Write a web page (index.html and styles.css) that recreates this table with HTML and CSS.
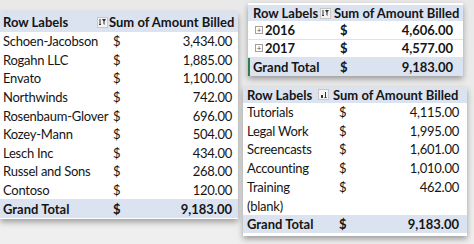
FILE: index.html
```html
<!DOCTYPE html>
<html>
<head>
<meta charset="utf-8">
<link rel="stylesheet" href="styles.css">
</head>
<body>
<div class="canvas">
  <div class="pivot left">
    <div class="row head">
      <span class="lbl">Row Labels<span class="fbtn"><svg width="9" height="8" viewBox="0 0 9 8"><path d="M2 1v6M1 6l1 1 1-1" stroke="#333" stroke-width="1" fill="none"/><path d="M4 1h4L6.5 3.5V7L5.5 6V3.5z" fill="#333"/></svg></span></span>
      <span class="sum">Sum of Amount Billed</span>
    </div>
    <div class="row"><span class="lbl">Schoen-Jacobson</span><span class="cur">$</span><span class="val">3,434.00</span></div>
    <div class="row"><span class="lbl">Rogahn LLC</span><span class="cur">$</span><span class="val">1,885.00</span></div>
    <div class="row"><span class="lbl">Envato</span><span class="cur">$</span><span class="val">1,100.00</span></div>
    <div class="row"><span class="lbl">Northwinds</span><span class="cur">$</span><span class="val">742.00</span></div>
    <div class="row"><span class="lbl">Rosenbaum-Glover</span><span class="cur">$</span><span class="val">696.00</span></div>
    <div class="row"><span class="lbl">Kozey-Mann</span><span class="cur">$</span><span class="val">504.00</span></div>
    <div class="row"><span class="lbl">Lesch Inc</span><span class="cur">$</span><span class="val">434.00</span></div>
    <div class="row"><span class="lbl">Russel and Sons</span><span class="cur">$</span><span class="val">268.00</span></div>
    <div class="row"><span class="lbl">Contoso</span><span class="cur">$</span><span class="val">120.00</span></div>
    <div class="row total"><span class="lbl">Grand Total</span><span class="cur">$</span><span class="val">9,183.00</span></div>
  </div>
  <div class="rightcol">
    <div class="pivot years">
      <div class="row head">
        <span class="lbl">Row Labels<span class="fbtn"><svg width="9" height="8" viewBox="0 0 9 8"><path d="M2 1v6M1 6l1 1 1-1" stroke="#333" stroke-width="1" fill="none"/><path d="M4 1h4L6.5 3.5V7L5.5 6V3.5z" fill="#333"/></svg></span></span>
        <span class="sum">Sum of Amount Billed</span>
      </div>
      <div class="row yr"><span class="lbl"><span class="plus">+</span>2016</span><span class="cur">$</span><span class="val">4,606.00</span></div>
      <div class="row yr"><span class="lbl"><span class="plus">+</span>2017</span><span class="cur">$</span><span class="val">4,577.00</span></div>
      <div class="row total sel"><span class="lbl">Grand Total</span><span class="cur">$</span><span class="val">9,183.00</span></div>
    </div>
    <div class="pivot types">
      <div class="row head">
        <span class="lbl">Row Labels<span class="fbtn"><svg width="9" height="8" viewBox="0 0 9 8"><path d="M6.5 1v6M5.5 6l1 1 1-1" stroke="#333" stroke-width="1" fill="none"/><path d="M2 4h2v3H2z" fill="#333"/></svg></span></span>
        <span class="sum">Sum of Amount Billed</span>
      </div>
      <div class="row"><span class="lbl">Tutorials</span><span class="cur">$</span><span class="val">4,115.00</span></div>
      <div class="row"><span class="lbl">Legal Work</span><span class="cur">$</span><span class="val">1,995.00</span></div>
      <div class="row"><span class="lbl">Screencasts</span><span class="cur">$</span><span class="val">1,601.00</span></div>
      <div class="row"><span class="lbl">Accounting</span><span class="cur">$</span><span class="val">1,010.00</span></div>
      <div class="row"><span class="lbl">Training</span><span class="cur">$</span><span class="val">462.00</span></div>
      <div class="row"><span class="lbl">(blank)</span><span class="cur"></span><span class="val"></span></div>
      <div class="row total"><span class="lbl">Grand Total</span><span class="cur">$</span><span class="val">9,183.00</span></div>
    </div>
  </div>
</div>
</body>
</html>
```

FILE: styles.css
```css
html, body {
  margin: 0;
  padding: 0;
}
body {
  width: 474px;
  height: 244px;
  overflow: hidden;
  background: #e6e6e6;
  font-family: "Lato", "Liberation Sans", sans-serif;
  font-size: 13px;
  letter-spacing: -0.25px;
  color: #151515;
}
.canvas {
  display: flex;
  align-items: flex-start;
  height: 244px;
  background: linear-gradient(#e9e9e9, #efefef);
}
.pivot {
  background: #fff;
  box-shadow: 0 3px 6px rgba(0,0,0,0.35);
}
.row {
  display: grid;
  align-items: center;
}
.head {
  background: #dbe3f1;
  font-weight: bold;
  letter-spacing: 0;
}
.total {
  background: #dbe3f1;
  font-weight: bold;
  letter-spacing: 0;
}
.lbl {
  display: flex;
  align-items: center;
  white-space: nowrap;
  min-width: 0;
}
.fbtn {
  margin-left: auto;
  flex: none;
  width: 9px;
  height: 9px;
  background: #f4f4f4;
  border: 1px solid #c8c8c8;
  display: flex;
  align-items: center;
  justify-content: center;
}
.sum {
  grid-column: 2 / 4;
  white-space: nowrap;
  min-width: 0;
}
.val {
  text-align: right;
}

/* left pivot */
.left {
  width: 238px;
  margin-top: 12px;
  padding-bottom: 1px;
}
.left .row {
  grid-template-columns: 106px 30px minmax(0, 1fr);
  height: 18.6px;
  padding: 0 6px 0 3px;
}
.left .head {
  height: 20px;
}
.left .head .fbtn {
  margin-right: 1px;
}
.left .cur {
  padding-left: 4px;
}
.left .total {
  height: 19px;
}

/* right column */
.rightcol {
  display: flex;
  flex-direction: column;
  margin-left: 5px;
}
.years {
  width: 215px;
  margin-left: 5px;
  margin-top: 3px;
  padding-top: 2px;
}
.years .row {
  grid-template-columns: 81px 30px minmax(0, 1fr);
  height: 17.5px;
  padding: 0 10px 0 5px;
  border-bottom: 1px solid #dbe3f1;
  font-weight: bold;
  letter-spacing: 0;
}
.years .head {
  height: 16px;
  border-bottom: 0;
}
.years .head .fbtn {
  margin-right: 3px;
}
.years .sel {
  border-left: 2px solid #2e7d4f;
  padding-left: 3px;
  border-bottom: 0;
}
.years .cur {
  padding-left: 6px;
}
.plus {
  flex: none;
  width: 6px;
  height: 6px;
  border: 1px solid #a0a0a0;
  font-size: 8px;
  line-height: 6px;
  text-align: center;
  color: #555;
  margin: 0 2px 0 2px;
  font-weight: normal;
}
.types {
  width: 224px;
  margin-top: 11px;
  padding-bottom: 3px;
}
.types .row {
  grid-template-columns: 86px 30px minmax(0, 1fr);
  height: 18.8px;
  padding: 0 8px 0 4px;
}
.types .head {
  height: 16px;
}
.types .head .fbtn {
  margin-right: 4px;
}
.types .cur {
  padding-left: 6px;
}
.types .total {
  height: 18px;
}
```
